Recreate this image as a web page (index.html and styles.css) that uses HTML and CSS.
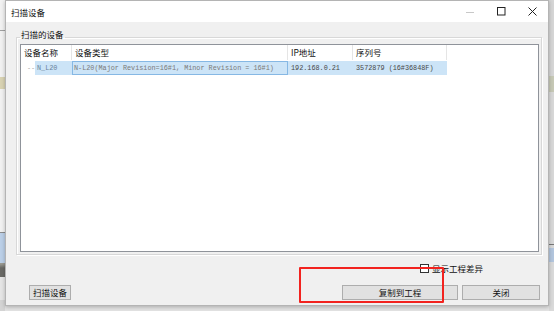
FILE: index.html
```html
<!DOCTYPE html>
<html lang="zh-CN">
<head>
    <meta charset="UTF-8">
    <title>扫描设备</title>
    <link rel="stylesheet" href="styles.css">
</head>
<body>
    <div class="screen">
        <!-- App behind the dialog -->
        <div class="side side-left"></div>

        <div class="dialog">
            <!-- Title bar -->
            <div class="titlebar">
                <span class="title">扫描设备</span>
                <div class="controls">
                    <span class="ctl ctl-min">
                        <svg width="9" height="9" viewBox="0 0 9 9"><path d="M0 5.5H8" stroke="#c8c8c8" stroke-width="1"/></svg>
                    </span>
                    <span class="ctl">
                        <svg width="9" height="9" viewBox="0 0 9 9"><rect x="0.5" y="0.5" width="7.5" height="7.5" fill="none" stroke="#222" stroke-width="1"/></svg>
                    </span>
                    <span class="ctl">
                        <svg width="9" height="9" viewBox="0 0 9 9"><path d="M0.5 0.5L8.5 8.5M8.5 0.5L0.5 8.5" stroke="#222" stroke-width="1"/></svg>
                    </span>
                </div>
            </div>

            <div class="content">
                <fieldset class="group">
                    <legend>扫描的设备</legend>
                    <div class="list">
                        <div class="list-head">
                            <div class="col c1">设备名称</div>
                            <div class="col c2">设备类型</div>
                            <div class="col c3">IP地址</div>
                            <div class="col c4">序列号</div>
                        </div>
                        <div class="list-row">
                            <div class="cell c1"><span class="tree">--</span><span class="sel">N_L20</span></div>
                            <div class="cell c2 focus">N-L20(Major Revision=16#1, Minor Revision = 16#1)</div>
                            <div class="cell c3 dark">192.168.0.21</div>
                            <div class="cell c4 dark">3572879 (16#36848F)</div>
                        </div>
                    </div>
                </fieldset>

                <div class="options">
                    <label class="check"><span class="box"></span>显示工程差异</label>
                </div>

                <div class="buttons">
                    <button class="btn btn-scan">扫描设备</button>
                    <button class="btn btn-copy">复制到工程</button>
                    <button class="btn btn-close">关闭</button>
                </div>
            </div>

            <!-- red annotation box -->
            <div class="mark"></div>
        </div>

        <div class="side side-right"></div>
    </div>
</body>
</html>
```

FILE: styles.css
```css
* {
    margin: 0;
    padding: 0;
    box-sizing: border-box;
}

html, body {
    width: 554px;
    height: 311px;
    overflow: hidden;
}

body {
    background: #e3e3e3;
    font-family: "Noto Sans CJK SC", "Noto Sans", sans-serif;
    font-size: 8.5px;
    color: #111;
}

.screen {
    display: flex;
    height: 311px;
}

/* Side strips of the window behind */
.side {
    width: 5px;
    height: 311px;
}

.side-left {
    background: linear-gradient(to bottom,
        #f2f2f2 0 30px, #a0a0a0 30px 31px, #f2f2f2 31px 77px,
        #d9d3b3 77px 89px, #f2f2f2 89px 232px, #8c8c8c 232px 233px,
        #bcd0e8 233px 263px, #9a9a92 263px 264px, #6a6a66 268px 277px,
        #e6e6e6 277px 300px, #d4d4d4 300px);
}

.side-right {
    background: linear-gradient(to bottom,
        #d6d6d6 0 76px, #c7c9b6 76px 92px, #d8d8d8 92px 244px,
        #777 244px 245px, #d8d8d8 245px 248px, #b3c6de 248px 262px,
        #dadada 262px);
}

/* Dialog */
.dialog {
    width: 544px;
    height: 306px;
    border: 1px solid #b4b4b4;
    background: #f0f0f0;
    display: flex;
    flex-direction: column;
    position: relative;
    box-shadow: 0 1px 4px rgba(0, 0, 0, 0.25);
}

.titlebar {
    height: 21px;
    background: #fff;
    display: flex;
    align-items: center;
    justify-content: space-between;
    padding-left: 5px;
}

.title {
    line-height: 20px;
}

.controls {
    display: flex;
    height: 21px;
}

.ctl {
    width: 31px;
    height: 21px;
    display: flex;
    align-items: center;
    justify-content: center;
}

.ctl svg {
    display: block;
}

.content {
    flex: 1;
    display: flex;
    flex-direction: column;
}

/* Group box */
.group {
    margin: 9px 6px 0 10px;
    padding: 1px 2px 2px 3px;
    border: 1px solid #d8d8d8;
    box-shadow: inset 1px 1px 0 #fff, 1px 1px 0 #fff;
    min-inline-size: 0;
}

.group legend {
    padding: 0 1px;
    line-height: 6px;
    height: 12px;
}

/* List view */
.list {
    height: 208px;
    border: 1px solid #8f939a;
    background: #fff;
}

.list-head {
    display: flex;
    height: 15px;
}

.col {
    border-right: 1px solid #e5e5e5;
    line-height: 15px;
    padding-left: 3px;
    white-space: nowrap;
}

.c1 { width: 51px; }
.c2 { width: 216px; }
.c3 { width: 65px; }
.c4 { width: 94px; }

.list-row {
    display: flex;
    height: 14px;
    margin-top: 1px;
    font-family: "Liberation Mono", monospace;
    font-size: 6.8px;
    line-height: 14px;
    color: #7a7a7a;
}

.cell {
    white-space: nowrap;
    overflow: hidden;
    background: #cce4f7;
    padding-left: 2px;
}

.cell.c1 {
    background: transparent;
    display: flex;
    padding-left: 6px;
}

.tree {
    width: 8px;
    color: #a8a8a8;
}

.sel {
    flex: 1;
    background: #cce4f7;
    padding-left: 2px;
    color: #6a8299;
}

.focus {
    border: 1px solid #86b8e4;
    line-height: 12px;
    padding-left: 1px;
}

.dark {
    color: #474747;
    padding-left: 3px;
}

/* Checkbox row */
.options {
    display: flex;
    margin-top: 7px;
    padding-left: 414px;
    height: 12px;
}

.check {
    display: flex;
    align-items: center;
    gap: 3px;
    line-height: 12px;
}

.box {
    width: 9px;
    height: 9px;
    border: 1px solid #333;
    background: #fff;
}

/* Buttons */
.buttons {
    display: flex;
    margin-top: 11px;
    padding: 0 8px 0 23px;
}

.btn {
    height: 15px;
    border: 1px solid #adadad;
    background: #e1e1e1;
    font-family: inherit;
    font-size: 8.5px;
    line-height: 13px;
    color: #111;
}

.btn-scan {
    width: 42px;
}

.btn-copy {
    width: 116px;
    margin-left: auto;
}

.btn-close {
    width: 78px;
    margin-left: 4px;
}

/* Red annotation rectangle */
.mark {
    position: absolute;
    left: 293px;
    top: 266px;
    width: 145px;
    height: 36px;
    border: 2px solid #f2231f;
    border-radius: 1px;
}
```
